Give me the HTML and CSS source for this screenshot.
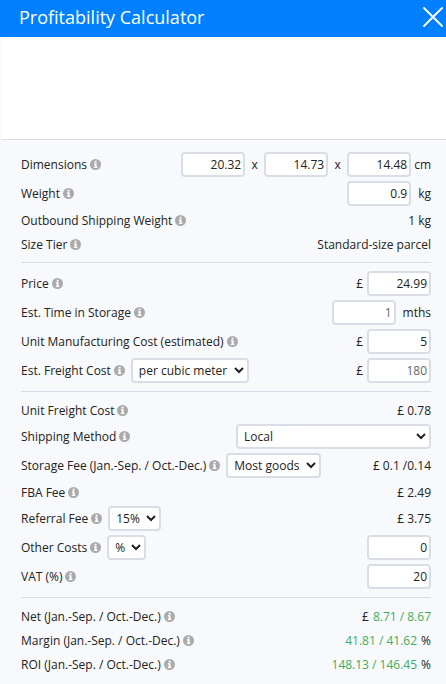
FILE: index.html
```html
<!DOCTYPE html>
<html lang="en">
<head>
    <meta charset="UTF-8">
    <meta name="viewport" content="width=device-width, initial-scale=1.0">
    <title>Profitability Calculator</title>
    <link rel="stylesheet" href="styles.css">
</head>
<body>

    <!-- Shared info icon -->
    <svg class="sprite" aria-hidden="true">
        <symbol id="info" viewBox="0 0 11 11">
            <circle cx="5.5" cy="5.5" r="5.5" fill="#aaa"/>
            <path d="M4.6 1.8h2v1.6h-2zM3.9 4.3h2.7v3.5h.8v1.2H3.8V7.8h.9V5.5h-.8z" fill="#fff"/>
        </symbol>
    </svg>

    <header class="header">
        <h1>Profitability Calculator</h1>
        <button class="btn-close" type="button" aria-label="Close">
            <svg width="20" height="20" viewBox="0 0 20 20"><path d="M1 1l18 18M19 1L1 19" stroke="#fff" stroke-width="1.8" stroke-linecap="round"/></svg>
        </button>
    </header>

    <div class="product"></div>

    <form class="calculator">
        <!-- Size and weight -->
        <section class="group">
            <div class="row row-field">
                <label for="length">Dimensions</label>
                <svg class="info"><use href="#info"/></svg>
                <div class="value dimensions">
                    <input type="text" id="length" value="20.32">
                    <span class="times">x</span>
                    <input type="text" aria-label="Width" value="14.73">
                    <span class="times">x</span>
                    <input type="text" aria-label="Height" value="14.48">
                    <span class="unit-cm">cm</span>
                </div>
            </div>
            <div class="row row-field">
                <label for="weight">Weight</label>
                <svg class="info"><use href="#info"/></svg>
                <div class="value unit-after">
                    <input type="text" id="weight" value="0.9">
                    <span>kg</span>
                </div>
            </div>
            <div class="row">
                <span>Outbound Shipping Weight</span>
                <svg class="info"><use href="#info"/></svg>
                <div class="value">1 kg</div>
            </div>
            <div class="row">
                <span>Size Tier</span>
                <svg class="info"><use href="#info"/></svg>
                <div class="value">Standard-size parcel</div>
            </div>
        </section>

        <!-- Price and sourcing -->
        <section class="group">
            <div class="row row-field">
                <label for="price">Price</label>
                <svg class="info"><use href="#info"/></svg>
                <div class="value">
                    <span>£</span>
                    <input type="text" id="price" value="24.99">
                </div>
            </div>
            <div class="row row-field">
                <label for="storageTime">Est. Time in Storage</label>
                <svg class="info"><use href="#info"/></svg>
                <div class="value unit-after">
                    <input type="text" class="muted" id="storageTime" value="1">
                    <span>mths</span>
                </div>
            </div>
            <div class="row row-field">
                <label for="unitCost">Unit Manufacturing Cost (estimated)</label>
                <svg class="info"><use href="#info"/></svg>
                <div class="value">
                    <span>£</span>
                    <input type="text" id="unitCost" value="5">
                </div>
            </div>
            <div class="row row-field">
                <label for="freightCost">Est. Freight Cost</label>
                <svg class="info"><use href="#info"/></svg>
                <select aria-label="Freight cost basis">
                    <option>per cubic meter</option>
                </select>
                <div class="value">
                    <span>£</span>
                    <input type="text" class="muted" id="freightCost" value="180">
                </div>
            </div>
        </section>

        <!-- Fees -->
        <section class="group">
            <div class="row">
                <span>Unit Freight Cost</span>
                <svg class="info"><use href="#info"/></svg>
                <div class="value">£ 0.78</div>
            </div>
            <div class="row row-field">
                <label for="shipping">Shipping Method</label>
                <svg class="info"><use href="#info"/></svg>
                <select class="select-wide" id="shipping">
                    <option>Local</option>
                </select>
            </div>
            <div class="row row-field">
                <label for="goods">Storage Fee (Jan.-Sep. / Oct.-Dec.)</label>
                <svg class="info"><use href="#info"/></svg>
                <select id="goods">
                    <option>Most goods</option>
                </select>
                <div class="value">£ 0.1 /0.14</div>
            </div>
            <div class="row">
                <span>FBA Fee</span>
                <svg class="info"><use href="#info"/></svg>
                <div class="value">£ 2.49</div>
            </div>
            <div class="row row-field">
                <label for="referral">Referral Fee</label>
                <svg class="info"><use href="#info"/></svg>
                <select id="referral">
                    <option>15%</option>
                </select>
                <div class="value">£ 3.75</div>
            </div>
            <div class="row row-field">
                <label for="otherCosts">Other Costs</label>
                <svg class="info"><use href="#info"/></svg>
                <select aria-label="Other costs unit">
                    <option>%</option>
                </select>
                <div class="value">
                    <input type="text" id="otherCosts" value="0">
                </div>
            </div>
            <div class="row row-field">
                <label for="vat">VAT (%)</label>
                <svg class="info"><use href="#info"/></svg>
                <div class="value">
                    <input type="text" id="vat" value="20">
                </div>
            </div>
        </section>

        <!-- Results -->
        <section class="group">
            <div class="row">
                <span>Net (Jan.-Sep. / Oct.-Dec.)</span>
                <svg class="info"><use href="#info"/></svg>
                <div class="value">£ <span class="profit">8.71 / 8.67</span></div>
            </div>
            <div class="row">
                <span>Margin (Jan.-Sep. / Oct.-Dec.)</span>
                <svg class="info"><use href="#info"/></svg>
                <div class="value"><span class="profit">41.81 / 41.62</span> %</div>
            </div>
            <div class="row">
                <span>ROI (Jan.-Sep. / Oct.-Dec.)</span>
                <svg class="info"><use href="#info"/></svg>
                <div class="value"><span class="profit">148.13 / 146.45</span> %</div>
            </div>
        </section>
    </form>

</body>
</html>
```
FILE: styles.css
```css
* {
    box-sizing: border-box;
}

body {
    margin: 0;
    font-family: "Open Sans", sans-serif;
    font-size: 12px;
    color: #222;
    background-color: #f7f9fc;
}

.sprite {
    display: none;
}

.header {
    display: flex;
    justify-content: space-between;
    align-items: center;
    height: 37px;
    padding: 0 3px 3px 19px;
    background-color: #0080ff;
    color: #fff;
}

h1 {
    margin: 0;
    font-size: 18px;
    font-weight: normal;
}

.btn-close {
    padding: 0;
    border: none;
    background: none;
    cursor: pointer;
}

.btn-close svg {
    display: block;
}

.product {
    height: 103px;
    margin-left: 1px;
    border-bottom: 1px solid #d9dee5;
    background-color: #fff;
}

.calculator {
    padding: 4px 15px 8px 21px;
}

.group {
    padding: 6px 0;
}

.group + .group {
    border-top: 1px solid #d5dce6;
}

.row {
    display: flex;
    align-items: center;
    height: 24px;
    white-space: nowrap;
}

.row-field {
    height: 29px;
}

.info {
    flex: none;
    width: 11px;
    height: 11px;
    margin-left: 3px;
}

.value {
    display: flex;
    align-items: center;
    gap: 4px;
    margin-left: auto;
}

.unit-after {
    gap: 7px;
}

.dimensions {
    gap: 0;
}

.times {
    width: 19px;
    text-align: center;
}

.unit-cm {
    margin-left: 3px;
}

input, select {
    height: 25px;
    border: 2px solid #d9dee6;
    border-radius: 4px;
    background-color: #fff;
    color: #222;
    font-family: inherit;
    font-size: 12px;
}

input {
    width: 64px;
    padding: 0 2px;
    text-align: right;
}

select {
    margin-left: 6px;
    padding: 0 3px 0 2px;
}

.select-wide {
    width: 195px;
    margin-left: auto;
}

.muted {
    color: #666;
}

.profit {
    color: #3fae5a;
}
```
